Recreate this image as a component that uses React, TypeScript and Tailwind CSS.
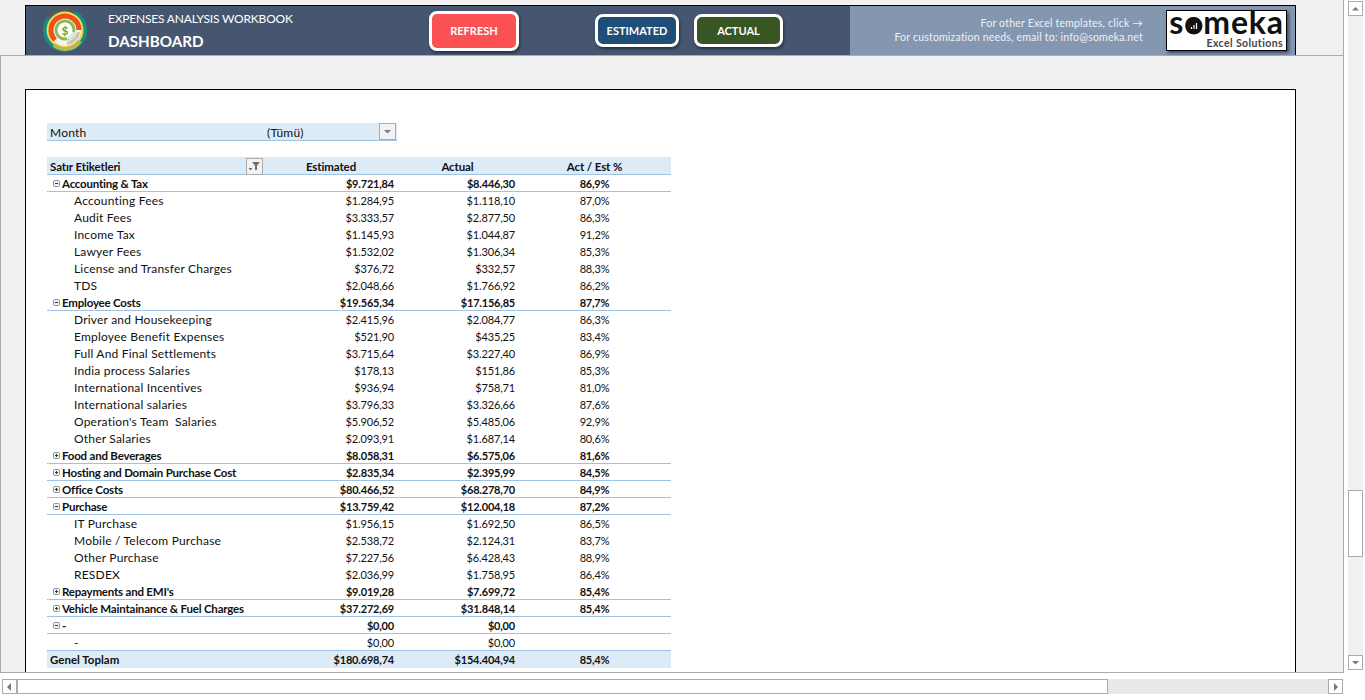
type Row = {
  kind: 'group' | 'item'
  label: string
  est: string
  act: string
  pct: string
  open?: boolean
  line?: boolean
}

const rows: Row[] = [
  { kind: 'group', label: 'Accounting & Tax', est: '$9.721,84', act: '$8.446,30', pct: '86,9%', open: true },
  { kind: 'item', label: 'Accounting Fees', est: '$1.284,95', act: '$1.118,10', pct: '87,0%' },
  { kind: 'item', label: 'Audit Fees', est: '$3.333,57', act: '$2.877,50', pct: '86,3%' },
  { kind: 'item', label: 'Income Tax', est: '$1.145,93', act: '$1.044,87', pct: '91,2%' },
  { kind: 'item', label: 'Lawyer Fees', est: '$1.532,02', act: '$1.306,34', pct: '85,3%' },
  { kind: 'item', label: 'License and Transfer Charges', est: '$376,72', act: '$332,57', pct: '88,3%' },
  { kind: 'item', label: 'TDS', est: '$2.048,66', act: '$1.766,92', pct: '86,2%' },
  { kind: 'group', label: 'Employee Costs', est: '$19.565,34', act: '$17.156,85', pct: '87,7%', open: true },
  { kind: 'item', label: 'Driver and Housekeeping', est: '$2.415,96', act: '$2.084,77', pct: '86,3%' },
  { kind: 'item', label: 'Employee Benefit Expenses', est: '$521,90', act: '$435,25', pct: '83,4%' },
  { kind: 'item', label: 'Full And Final Settlements', est: '$3.715,64', act: '$3.227,40', pct: '86,9%' },
  { kind: 'item', label: 'India process Salaries', est: '$178,13', act: '$151,86', pct: '85,3%' },
  { kind: 'item', label: 'International Incentives', est: '$936,94', act: '$758,71', pct: '81,0%' },
  { kind: 'item', label: 'International salaries', est: '$3.796,33', act: '$3.326,66', pct: '87,6%' },
  { kind: 'item', label: "Operation's Team  Salaries", est: '$5.906,52', act: '$5.485,06', pct: '92,9%' },
  { kind: 'item', label: 'Other Salaries', est: '$2.093,91', act: '$1.687,14', pct: '80,6%' },
  { kind: 'group', label: 'Food and Beverages', est: '$8.058,31', act: '$6.575,06', pct: '81,6%' },
  { kind: 'group', label: 'Hosting and Domain Purchase Cost', est: '$2.835,34', act: '$2.395,99', pct: '84,5%' },
  { kind: 'group', label: 'Office Costs', est: '$80.466,52', act: '$68.278,70', pct: '84,9%' },
  { kind: 'group', label: 'Purchase', est: '$13.759,42', act: '$12.004,18', pct: '87,2%', open: true },
  { kind: 'item', label: 'IT Purchase', est: '$1.956,15', act: '$1.692,50', pct: '86,5%' },
  { kind: 'item', label: 'Mobile / Telecom Purchase', est: '$2.538,72', act: '$2.124,31', pct: '83,7%' },
  { kind: 'item', label: 'Other Purchase', est: '$7.227,56', act: '$6.428,43', pct: '88,9%' },
  { kind: 'item', label: 'RESDEX', est: '$2.036,99', act: '$1.758,95', pct: '86,4%' },
  { kind: 'group', label: "Repayments and EMI's", est: '$9.019,28', act: '$7.699,72', pct: '85,4%' },
  { kind: 'group', label: 'Vehicle Maintainance & Fuel Charges', est: '$37.272,69', act: '$31.848,14', pct: '85,4%' },
  { kind: 'group', label: '-', est: '$0,00', act: '$0,00', pct: '', open: true },
  { kind: 'item', label: '-', est: '$0,00', act: '$0,00', pct: '', line: true },
]

function Toggle({ open }: { open?: boolean }) {
  return (
    <svg width="7" height="7" viewBox="0 0 7 7" className="shrink-0">
      <rect x="0.5" y="0.5" width="6" height="6" rx="1" fill="#eef0f3" stroke="#8e949c" />
      <path d="M2 3.5h3" stroke="#333" />
      {!open && <path d="M3.5 2v3" stroke="#333" />}
    </svg>
  )
}

function Logo() {
  return (
    <svg width="46" height="46" viewBox="0 0 46 46" className="shrink-0">
      <circle cx="23" cy="23" r="22" fill="#12907f" />
      <path d="M5.500 11A21 21 0 0 1 33 5" fill="none" stroke="#55585c" strokeWidth="4" />
      <circle cx="23" cy="23" r="18.500" fill="#f3d94f" />
      <path d="M38 34A18 18 0 0 1 12 38" fill="none" stroke="#c4b54a" strokeWidth="4" />
      <circle cx="23" cy="23" r="16" fill="#f4f4f0" />
      <path d="M13.100 32.900A14 14 0 1 1 37 23" fill="none" stroke="#f0501c" strokeWidth="5" />
      <path d="M36.500 25A14 14 0 0 1 25 36.500" fill="none" stroke="#c8c8b8" strokeWidth="3.500" />
      <circle cx="23" cy="23" r="10.500" fill="#8dbb4c" />
      <path d="M31.500 25A9 9 0 0 1 25 31.500" fill="none" stroke="#e9e9e4" strokeWidth="3" />
      <circle cx="23" cy="23" r="7.500" fill="#ffffff" />
      <text x="23" y="27.500" textAnchor="middle" fontSize="12" fontWeight="700" fill="#6fa33a" fontFamily="Lato, sans-serif">$</text>
    </svg>
  )
}

function Row({ row }: { row: Row }) {
  const isGroup = row.kind === 'group'
  const numbers = isGroup ? 'pt-px tracking-[-0.2px]' : 'tracking-[-0.15px]'
  return (
    <div
      className={`grid h-[17px] grid-cols-[218px_132px_121px_153px] items-center ${
        isGroup || row.line ? 'border-b border-[#9dc3e6]' : ''
      } ${isGroup ? 'font-bold' : ''}`}
    >
      {isGroup ? (
        <div className="flex items-center gap-[2px] pl-[6px] text-[11.500px] tracking-[-0.2px] whitespace-nowrap">
          <Toggle open={row.open} />
          <span>{row.label}</span>
        </div>
      ) : (
        <div className="pl-[27px] text-[12px] tracking-[0.2px] whitespace-pre">{row.label}</div>
      )}
      <div className={`pr-[3px] text-right text-[11px] ${numbers}`}>{row.est}</div>
      <div className={`pr-[3px] text-right text-[11px] ${numbers}`}>{row.act}</div>
      <div className={`text-center text-[11px] ${numbers}`}>{row.pct}</div>
    </div>
  )
}

function TopButton({ label, className }: { label: string; className: string }) {
  return (
    <button
      className={`flex items-center justify-center rounded-[8px] border-[3px] border-white pt-px text-[11px] font-bold text-white shadow-[1px_2px_3px_rgba(0,0,0,0.45)] ${className}`}
    >
      {label}
    </button>
  )
}

function Triangle({ dir }: { dir: 'up' | 'down' | 'left' | 'right' }) {
  const d = {
    up: 'M1 6.500L4.500 3L8 6.500Z',
    down: 'M1 3H8L4.500 6.500Z',
    left: 'M6 1V9L2 5Z',
    right: 'M3 1V9L7 5Z',
  }[dir]
  return (
    <svg width="9" height="10" viewBox="0 0 9 10">
      <path d={d} fill="#7a7a7a" />
    </svg>
  )
}

function ScrollButton({ dir }: { dir: 'up' | 'down' | 'left' | 'right' }) {
  return (
    <div className="flex h-[15px] w-[15px] shrink-0 items-center justify-center border border-[#ababab] bg-white">
      <Triangle dir={dir} />
    </div>
  )
}

export default function App() {
  return (
    <div className="flex h-[700px] w-[1365px] overflow-hidden bg-white font-['Lato','Open_Sans',sans-serif] text-[#111]">
      <div className="flex w-[1344px] shrink-0 flex-col">
        <div className="flex h-[673px] flex-col border-r border-b border-[#ababab] bg-[#f1f1f1]">
          {/* Frozen header */}
          <div className="h-[56px] shrink-0 border-b border-[#ababab] px-[25px] pt-[5px]">
            <div className="flex h-[50px] w-[1271px] border-x border-t border-black bg-[#465670]">
              <div className="flex w-[824px] shrink-0 items-center">
                <div className="ml-[16px] -mt-[1px]">
                  <Logo />
                </div>
                <div className="ml-[20px] -mt-[1px] w-[321px] shrink-0 text-white">
                  <div className="text-[12px] leading-[18px] tracking-[-0.2px] whitespace-nowrap">EXPENSES ANALYSIS WORKBOOK</div>
                  <div className="mt-[4px] text-[15.200px] leading-[18px] font-bold">DASHBOARD</div>
                </div>
                <TopButton label="REFRESH" className="h-[40px] w-[90px] bg-[#fb5153]" />
                <TopButton label="ESTIMATED" className="ml-[76px] h-[33px] w-[84px] bg-[#1f4e79]" />
                <TopButton label="ACTUAL" className="ml-[15px] h-[33px] w-[89px] bg-[#375623]" />
              </div>
              <div className="flex flex-1 items-center justify-end bg-[#8497b0]">
                <div className="-mt-[1px] text-right text-[10.500px] leading-[14px] tracking-[0.2px] text-[#eef1f5] whitespace-nowrap">
                  <div>For other Excel templates, click →</div>
                  <div>For customization needs, email to: info@someka.net</div>
                </div>
                <div className="mr-[8px] ml-[23px] h-[41px] w-[121px] border border-black bg-white text-center shadow-[2px_2px_3px_rgba(30,40,60,0.7)]">
                  <div className="h-[21px] text-[32px] leading-[21px] font-bold tracking-[0.8px] text-[#111]">
                    s
                    <span className="relative inline-block h-[21px]">
                      o
                      <svg width="18" height="18" viewBox="0 0 18 18" className="absolute top-[6px] left-1/2 -translate-x-1/2">
                        <circle cx="9" cy="9" r="8.500" fill="#111" />
                        <path d="M6.500 12V10M9 12V8M11.500 12V6" stroke="#fff" strokeWidth="1.200" />
                      </svg>
                    </span>
                    meka
                  </div>
                  <div className="mt-[6px] pr-[3px] text-right text-[10.500px] leading-[11px] font-bold tracking-[0.4px] text-[#444]">Excel Solutions</div>
                </div>
              </div>
            </div>
          </div>

          {/* Sheet */}
          <div className="flex-1 border-l border-[#ababab] pt-[33px] pl-[24px]">
            <div className="h-full w-[1271px] border-x border-t border-black bg-white pt-[33px] pl-[21px]">
              <div className="flex h-[18px] w-[350px] items-center border-b border-[#9dc3e6] bg-[#ddebf7] text-[12px]">
                <div className="w-[220px] pt-[2px] pl-[3px] tracking-[0.2px]">Month</div>
                <div className="flex-1 pt-[2px] tracking-[0.2px]">(Tümü)</div>
                <div className="mr-px flex h-[17px] w-[17px] items-center justify-center border border-[#ababab] bg-[#f2f2f2]">
                  <Triangle dir="down" />
                </div>
              </div>

              <div className="mt-[16px] w-[624px]">
                <div className="grid h-[18px] grid-cols-[218px_132px_121px_153px] items-center border-b border-[#9dc3e6] bg-[#ddebf7] text-[11.500px] font-bold tracking-[-0.1px]">
                  <div className="flex items-center justify-between pr-[2px] pl-[3px]">
                    <span className="pt-px">Satır Etiketleri</span>
                    <span className="flex h-[17px] w-[17px] items-center justify-center border border-[#ababab] bg-[#f2f2f2]">
                      <svg width="13" height="11" viewBox="0 0 13 11">
                        <path d="M4 1H12L9 4.500V9H7V4.500Z" fill="#6f6f6f" />
                        <path d="M0.500 7H4.500L2.500 9.500Z" fill="#6f6f6f" />
                      </svg>
                    </span>
                  </div>
                  <div className="pt-px text-center">Estimated</div>
                  <div className="pt-px text-center">Actual</div>
                  <div className="pt-px text-center">Act / Est %</div>
                </div>
                {rows.map((row, i) => (
                  <Row key={i} row={row} />
                ))}
                <div className="grid h-[17px] grid-cols-[218px_132px_121px_153px] items-center bg-[#ddebf7] font-bold">
                  <div className="pl-[3px] text-[11.500px]">Genel Toplam</div>
                  <div className="pt-px pr-[3px] text-right text-[11px] tracking-[-0.2px]">$180.698,74</div>
                  <div className="pt-px pr-[3px] text-right text-[11px] tracking-[-0.2px]">$154.404,94</div>
                  <div className="pt-px text-center text-[11px] tracking-[-0.2px]">85,4%</div>
                </div>
              </div>
            </div>
          </div>
        </div>

        {/* Horizontal scrollbar */}
        <div className="mt-[6px] ml-[2px] flex h-[15px] w-[1341px] bg-[#e9e9e9]">
          <ScrollButton dir="left" />
          <div className="h-[15px] w-[1091px] border border-[#ababab] bg-white" />
          <div className="flex-1" />
          <ScrollButton dir="right" />
        </div>
      </div>

      {/* Vertical scrollbar */}
      <div className="pt-px pl-[4px]">
        <div className="flex h-[669px] w-[15px] flex-col bg-[#f0f0f0]">
          <ScrollButton dir="up" />
          <div className="h-[474px] shrink-0" />
          <div className="h-[67px] shrink-0 border border-[#ababab] bg-white" />
          <div className="flex-1" />
          <ScrollButton dir="down" />
        </div>
      </div>
    </div>
  )
}
